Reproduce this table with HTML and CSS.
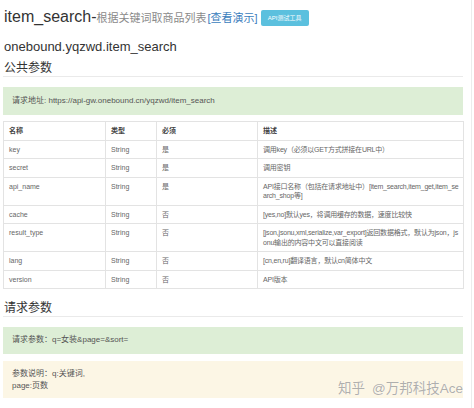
FILE: index.html
```html
<!DOCTYPE html>
<html lang="zh-CN">
<head>
<meta charset="utf-8">
<title>item_search</title>
<link rel="stylesheet" href="styles.css">
</head>
<body>
<div class="page">
  <div class="content">
    <div class="title-row">
      <h1 class="title">item_search-</h1>
      <span class="subtitle">根据关键词取商品列表</span>
      <a class="demo-link" href="#">[查看演示]</a>
      <span class="tool-btn">API测试工具</span>
    </div>
    <div class="method">onebound.yqzwd.item_search</div>
    <h2 class="section-title">公共参数</h2>
    <div class="alert alert-green">请求地址: https://api-gw.onebound.cn/yqzwd/item_search</div>
    <table class="params">
      <colgroup>
        <col class="c1"><col class="c2"><col class="c3"><col class="c4">
      </colgroup>
      <thead>
        <tr><th>名称</th><th>类型</th><th>必须</th><th>描述</th></tr>
      </thead>
      <tbody>
        <tr><td>key</td><td>String</td><td>是</td><td class="desc">调用key（必须以GET方式拼接在URL中）</td></tr>
        <tr><td>secret</td><td>String</td><td>是</td><td class="desc">调用密钥</td></tr>
        <tr><td>api_name</td><td>String</td><td>是</td><td class="desc">API接口名称（包括在请求地址中）[item_search,item_get,item_se<br>arch_shop等]</td></tr>
        <tr><td>cache</td><td>String</td><td>否</td><td class="desc">[yes,no]默认yes，将调用缓存的数据，速度比较快</td></tr>
        <tr><td>result_type</td><td>String</td><td>否</td><td class="desc">[json,jsonu,xml,serialize,var_export]返回数据格式，默认为json，js<br>onu输出的内容中文可以直接阅读</td></tr>
        <tr><td>lang</td><td>String</td><td>否</td><td class="desc">[cn,en,ru]翻译语言，默认cn简体中文</td></tr>
        <tr><td>version</td><td>String</td><td>否</td><td class="desc">API版本</td></tr>
      </tbody>
    </table>
    <h2 class="section-title section-gap">请求参数</h2>
    <div class="alert alert-green alert-small">请求参数：q=女装&amp;page=&amp;sort=</div>
    <div class="alert alert-yellow">参数说明：q:关键词,<br>page:页数</div>
  </div>
  <div class="watermark"><span class="wm-site">知乎</span>@万邦科技Ace</div>
</div>
</body>
</html>
```

FILE: styles.css
```css
html, body {
  margin: 0;
  padding: 0;
  background: #fff;
}
body {
  font-family: "Liberation Sans", "Noto Sans CJK SC", sans-serif;
  color: #333;
}
.page {
  position: relative;
  width: 468px;
  height: 408px;
  padding-left: 3px;
  border-right: 1px solid #ececec;
  overflow: hidden;
}
.content {
  width: 460px;
}
.title-row {
  display: flex;
  align-items: baseline;
  margin-top: 7px;
  height: 20px;
  line-height: 20px;
  padding-left: 1px;
}
.title {
  margin: 0;
  font-size: 16px;
  font-weight: normal;
  color: #333;
}
.subtitle {
  font-size: 11px;
  color: #8a8a8a;
}
.demo-link {
  font-size: 11px;
  color: #3a7dbd;
  text-decoration: none;
  margin-left: 1px;
}
.tool-btn {
  display: inline-block;
  margin-left: 3px;
  width: 48px;
  height: 16px;
  line-height: 16px;
  background: #5bc0de;
  color: #fff;
  font-size: 6px;
  text-align: center;
  border-radius: 2px;
  position: relative;
  top: -2px;
}
.method {
  margin-top: 12px;
  font-size: 13px;
  line-height: 16px;
  color: #333;
  padding-left: 1px;
}
.section-title {
  margin: 6px 0 0;
  font-size: 12px;
  font-weight: normal;
  line-height: 14px;
  padding: 0 0 1px 1px;
  border-bottom: 1px solid #eaeaea;
  color: #333;
}
.section-gap {
  margin-top: 12px;
}
.alert {
  margin-top: 10px;
  padding: 9px 9px;
  font-size: 8px;
  line-height: 10px;
  color: #555;
}
.alert-green {
  background: #ddeed6;
}
.alert-small {
  padding: 8px 9px 9px;
}
.alert-yellow {
  margin-top: 7px;
  background: #fcf6e5;
  padding: 7px 9px 6px;
  line-height: 12px;
}
.params {
  margin-top: 6px;
  width: 460px;
  table-layout: fixed;
  border-collapse: collapse;
  font-size: 7px;
  line-height: 9.5px;
  color: #666;
}
.params col.c1 { width: 102px; }
.params col.c2 { width: 51px; }
.params col.c3 { width: 101px; }
.params col.c4 { width: 206px; }
.params th,
.params td {
  border: 1px solid #e3e3e3;
  padding: 4px 5px;
  text-align: left;
  white-space: nowrap;
  vertical-align: top;
}
.params td.desc {
  letter-spacing: -0.2px;
}
.params th {
  font-weight: bold;
  color: #444;
}
.watermark {
  position: absolute;
  left: 338px;
  top: 380px;
  font-size: 13.5px;
  line-height: 18px;
  color: rgba(140, 140, 140, 0.7);
  text-shadow: 0 0 1px rgba(255, 255, 255, 0.9);
  white-space: nowrap;
}
.wm-site {
  margin-right: 7px;
}
```
